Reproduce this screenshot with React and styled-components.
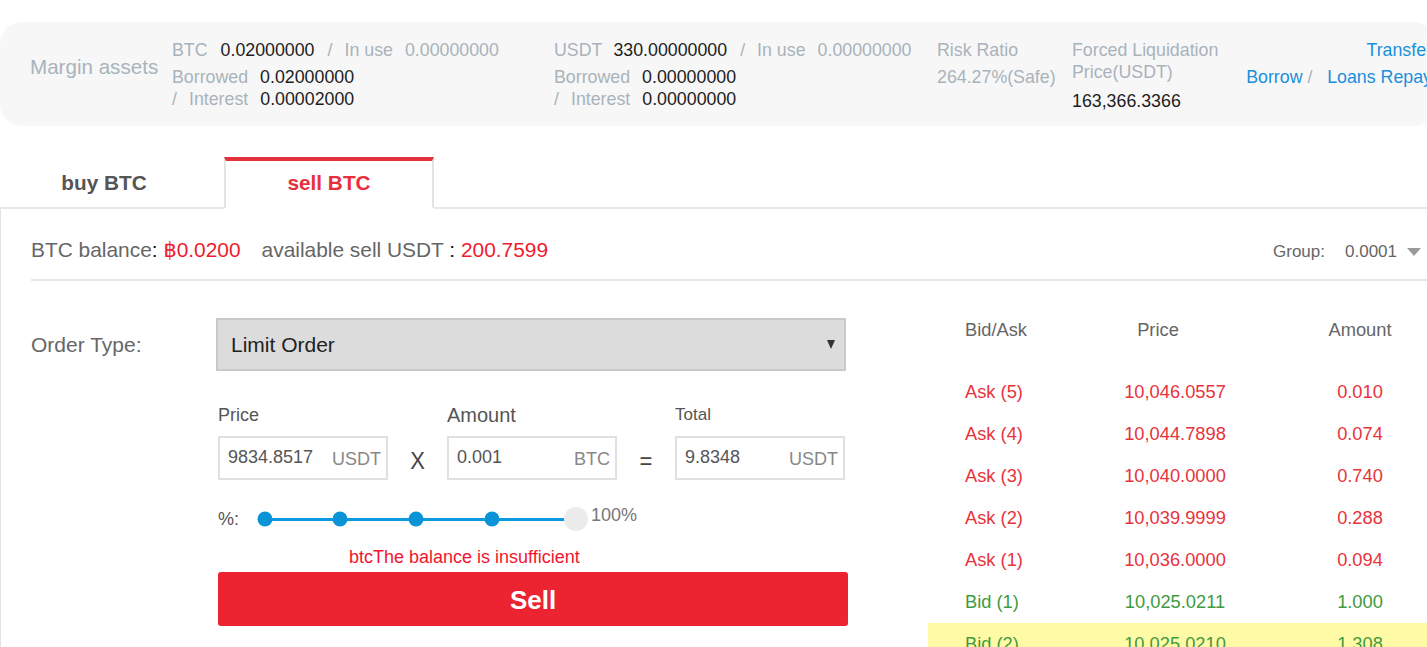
import React from "react";
import styled, { createGlobalStyle } from "styled-components";

const GlobalStyle = createGlobalStyle`
  html, body { margin: 0; padding: 0; background: #fff; overflow: hidden; }
  body { font-family: "Liberation Sans", Arial, "DejaVu Sans", sans-serif; }
  * { box-sizing: border-box; }
`;

const GRAY = "#a9b3bb";
const RED = "#ee1c2e";
const ASK = "#e8333c";
const BID = "#3f9b3f";
const BLUE = "#1a8fdc";

const Page = styled.div`
  width: 1427px;
  height: 647px;
  overflow: hidden;
`;

const MarginPanel = styled.div`
  margin-top: 22px;
  width: 1436px;
  height: 104px;
  background: #f7f7f7;
  border-radius: 22px;
  display: flex;
  padding: 17px 5px 0 0;
`;

const PanelTitle = styled.div`
  width: 172px;
  flex-shrink: 0;
  padding-left: 30px;
  margin-top: 16px;
  font-size: 20.6px;
  line-height: 24px;
  color: ${GRAY};
  white-space: nowrap;
`;

const AssetCol = styled.div`
  width: ${(p) => p.$w}px;
  flex-shrink: 0;
  font-size: 17.8px;
  line-height: 22px;
  text-align: ${(p) => (p.$right ? "right" : "left")};
  margin-left: ${(p) => (p.$right ? "auto" : "0")};
`;

const Line = styled.div`
  display: flex;
  justify-content: ${(p) => (p.$right ? "flex-end" : "flex-start")};
  white-space: nowrap;
  margin-bottom: ${(p) => p.$mb || 0}px;
`;

const Lbl = styled.span`
  color: ${GRAY};
  margin-right: ${(p) => (p.$mr ?? 12)}px;
`;

const Val = styled.span`
  color: ${(p) => (p.$muted ? GRAY : "#1d1d1d")};
  margin-right: 13px;
`;

const LinkText = styled.span`
  color: ${BLUE};
`;

const TabBar = styled.div`
  margin-top: 31px;
  height: 52px;
  display: flex;
`;

const Tab = styled.div`
  width: ${(p) => (p.$active ? 210 : 224)}px;
  display: flex;
  align-items: center;
  justify-content: center;
  padding-right: ${(p) => (p.$active ? 0 : 16)}px;
  padding-bottom: 2px;
  font-size: 20.8px;
  font-weight: bold;
  color: ${(p) => (p.$active ? "#e8303c" : "#555")};
  background: #fff;
  border-top: ${(p) => (p.$active ? "4px solid #e4323c" : "4px solid transparent")};
  border-left: ${(p) => (p.$active ? "2px solid #e3e3e3" : "none")};
  border-right: ${(p) => (p.$active ? "2px solid #e3e3e3" : "none")};
  border-bottom: ${(p) => (p.$active ? "2px solid #fff" : "2px solid #e8e8e8")};
`;

const TabFill = styled.div`
  flex: 1;
  border-bottom: 2px solid #e8e8e8;
`;

const Content = styled.div`
  display: flex;
  border-left: 1px solid #e3e3e3;
  height: 470px;
`;

const LeftCol = styled.div`
  width: 927px;
  flex-shrink: 0;
  padding-left: 30px;
`;

const RightCol = styled.div`
  flex: 1;
  min-width: 0;
`;

const BalanceRow = styled.div`
  height: 72px;
  padding-top: 29px;
  line-height: 24px;
  font-size: 20.9px;
  color: #666;
  border-bottom: 2px solid #e6e6e6;
  white-space: nowrap;
`;

const Dark = styled.span`
  color: #111;
`;

const RedVal = styled.span`
  color: ${RED};
  margin-right: ${(p) => p.$mr || 0}px;
`;

const GroupRow = styled.div`
  height: 72px;
  padding-top: 32px;
  padding-right: 6px;
  display: flex;
  justify-content: flex-end;
  align-items: flex-start;
  font-size: 17px;
  line-height: 22px;
  color: #666;
  border-bottom: 2px solid #e6e6e6;
`;

const GroupValue = styled.span`
  margin-left: 20px;
`;

const Caret = styled.span`
  width: 0;
  height: 0;
  margin-left: 10px;
  margin-top: 7px;
  border-left: 7px solid transparent;
  border-right: 7px solid transparent;
  border-top: 8px solid #9a9a9a;
`;

const OrderRow = styled.div`
  margin-top: 37px;
  display: flex;
  align-items: center;
`;

const FormLabel = styled.div`
  width: 185px;
  font-size: 21px;
  color: #666;
`;

const Select = styled.div`
  width: 630px;
  height: 53px;
  background: #dcdcdc;
  border: 2px solid #c9c9c9;
  display: flex;
  align-items: center;
  justify-content: space-between;
  padding: 0 9px 0 13px;
  font-size: 21px;
  color: #222;
`;

const SelectArrow = styled.span`
  width: 0;
  height: 0;
  border-left: 4px solid transparent;
  border-right: 4px solid transparent;
  border-top: 9px solid #333;
`;

const FieldsRow = styled.div`
  margin-top: 33px;
  padding-left: 187px;
  display: flex;
  align-items: flex-end;
`;

const Field = styled.div`
  display: flex;
  flex-direction: column;
`;

const FieldLabel = styled.div`
  font-size: ${(p) => p.$size}px;
  line-height: 22px;
  color: #555;
  margin-bottom: 10px;
`;

const InputBox = styled.div`
  width: 170px;
  height: 44px;
  border: 2px solid #e0e0e0;
  display: flex;
  align-items: center;
  justify-content: space-between;
  padding: 0 5px 2px 8px;
  font-size: 18px;
`;

const InputValue = styled.span`
  color: #555;
`;

const Unit = styled.span`
  color: #888;
  margin-top: 4px;
`;

const Operator = styled.div`
  width: ${(p) => p.$w}px;
  height: 44px;
  display: flex;
  align-items: center;
  justify-content: center;
  font-size: 22px;
  color: #444;
  padding-top: 5px;
  transform: scaleY(1.1);
`;

const SliderRow = styled.div`
  margin-top: 27px;
  padding-left: 187px;
  height: 24px;
  display: flex;
  align-items: center;
`;

const SliderLabel = styled.div`
  width: 47px;
  font-size: 18px;
  color: #555;
`;

const Track = styled.div`
  position: relative;
  width: 311px;
  height: 3px;
  background: #0b9ae0;
`;

const Dot = styled.span`
  position: absolute;
  top: 50%;
  width: 15px;
  height: 15px;
  border-radius: 50%;
  background: #0b93d8;
  transform: translate(-50%, -50%);
`;

const Knob = styled.span`
  position: absolute;
  top: 50%;
  left: 100%;
  width: 24px;
  height: 24px;
  border-radius: 50%;
  background: #ebebeb;
  transform: translate(-50%, -50%);
`;

const SliderValue = styled.span`
  margin-left: 15px;
  margin-top: -7px;
  font-size: 18px;
  color: #777;
`;

const ErrorMsg = styled.div`
  margin-top: 15px;
  padding-left: 318px;
  font-size: 18px;
  line-height: 22px;
  color: #f2152d;
`;

const SellButton = styled.button`
  display: block;
  margin-top: 4px;
  margin-left: 187px;
  width: 630px;
  height: 54px;
  padding-top: 4px;
  border: none;
  border-radius: 3px;
  background: #ec2331;
  color: #fff;
  font-family: "Liberation Sans", Arial, sans-serif;
  font-weight: bold;
  font-size: 26px;
`;

const BookHeader = styled.div`
  margin-top: 28px;
  margin-bottom: 20px;
`;

const BookRow = styled.div`
  display: grid;
  grid-template-columns: 130px 160px 210px;
  height: 42px;
  align-items: center;
  padding-left: 37px;
  font-size: 18.3px;
  color: ${(p) => p.$color};
  background: ${(p) => (p.$hl ? "#fffaa6" : "transparent")};
`;

const Cell = styled.span`
  text-align: ${(p) => p.$align || "left"};
  padding-right: ${(p) => p.$pr || 0}px;
  white-space: nowrap;
`;

const asks = [
  ["Ask (5)", "10,046.0557", "0.010"],
  ["Ask (4)", "10,044.7898", "0.074"],
  ["Ask (3)", "10,040.0000", "0.740"],
  ["Ask (2)", "10,039.9999", "0.288"],
  ["Ask (1)", "10,036.0000", "0.094"],
];
const bids = [
  ["Bid (1)", "10,025.0211", "1.000"],
  ["Bid (2)", "10,025.0210", "1.308"],
];

export default function App() {
  return (
    <Page>
      <GlobalStyle />
      <MarginPanel>
        <PanelTitle>Margin assets</PanelTitle>
        <AssetCol $w={382}>
          <Line $mb={5}>
            <Lbl $mr={13}>BTC</Lbl>
            <Val>0.02000000</Val>
            <Lbl>/</Lbl>
            <Lbl>In use</Lbl>
            <Val $muted>0.00000000</Val>
          </Line>
          <Line>
            <Lbl>Borrowed</Lbl>
            <Val>0.02000000</Val>
          </Line>
          <Line>
            <Lbl>/</Lbl>
            <Lbl>Interest</Lbl>
            <Val>0.00002000</Val>
          </Line>
        </AssetCol>
        <AssetCol $w={383}>
          <Line $mb={5}>
            <Lbl $mr={11}>USDT</Lbl>
            <Val>330.00000000</Val>
            <Lbl>/</Lbl>
            <Lbl>In use</Lbl>
            <Val $muted>0.00000000</Val>
          </Line>
          <Line>
            <Lbl>Borrowed</Lbl>
            <Val>0.00000000</Val>
          </Line>
          <Line>
            <Lbl>/</Lbl>
            <Lbl>Interest</Lbl>
            <Val>0.00000000</Val>
          </Line>
        </AssetCol>
        <AssetCol $w={135}>
          <Line $mb={5}>
            <Lbl $mr={0}>Risk Ratio</Lbl>
          </Line>
          <Line>
            <Lbl $mr={0}>264.27%(Safe)</Lbl>
          </Line>
        </AssetCol>
        <AssetCol $w={160}>
          <Line>
            <Lbl $mr={0}>Forced Liquidation</Lbl>
          </Line>
          <Line $mb={7}>
            <Lbl $mr={0}>Price(USDT)</Lbl>
          </Line>
          <Line>
            <Val>163,366.3366</Val>
          </Line>
        </AssetCol>
        <AssetCol $w={200} $right>
          <Line $mb={5} $right>
            <LinkText>Transfer</LinkText>
          </Line>
          <Line $right>
            <LinkText>Borrow</LinkText>
            <Lbl $mr={0}>&nbsp;/&nbsp;&nbsp;&nbsp;</Lbl>
            <LinkText>Loans Repay</LinkText>
          </Line>
        </AssetCol>
      </MarginPanel>

      <TabBar>
        <Tab>buy BTC</Tab>
        <Tab $active>sell BTC</Tab>
        <TabFill />
      </TabBar>

      <Content>
        <LeftCol>
          <BalanceRow>
            BTC balance<Dark>: </Dark>
            <RedVal $mr={21}>฿0.0200</RedVal>
            available sell USDT <Dark>: </Dark>
            <RedVal>200.7599</RedVal>
          </BalanceRow>

          <OrderRow>
            <FormLabel>Order Type:</FormLabel>
            <Select>
              <span>Limit Order</span>
              <SelectArrow />
            </Select>
          </OrderRow>

          <FieldsRow>
            <Field>
              <FieldLabel $size={18}>Price</FieldLabel>
              <InputBox>
                <InputValue>9834.8517</InputValue>
                <Unit>USDT</Unit>
              </InputBox>
            </Field>
            <Operator $w={59}>X</Operator>
            <Field>
              <FieldLabel $size={20}>Amount</FieldLabel>
              <InputBox>
                <InputValue>0.001</InputValue>
                <Unit>BTC</Unit>
              </InputBox>
            </Field>
            <Operator $w={58}>=</Operator>
            <Field>
              <FieldLabel $size={17}>Total</FieldLabel>
              <InputBox>
                <InputValue>9.8348</InputValue>
                <Unit>USDT</Unit>
              </InputBox>
            </Field>
          </FieldsRow>

          <SliderRow>
            <SliderLabel>%:</SliderLabel>
            <Track>
              {[0, 24, 48.5, 73].map((l) => (
                <Dot key={l} style={{ left: `${l}%` }} />
              ))}
              <Knob />
            </Track>
            <SliderValue>100%</SliderValue>
          </SliderRow>

          <ErrorMsg>btcThe balance is insufficient</ErrorMsg>
          <SellButton>Sell</SellButton>
        </LeftCol>

        <RightCol>
          <GroupRow>
            <span>Group:</span>
            <GroupValue>0.0001</GroupValue>
            <Caret />
          </GroupRow>
          <BookHeader>
            <BookRow $color="#666">
              <Cell>Bid/Ask</Cell>
              <Cell $align="center" $pr={34}>Price</Cell>
              <Cell $align="center">Amount</Cell>
            </BookRow>
          </BookHeader>
          {asks.map((r) => (
            <BookRow key={r[0]} $color={ASK}>
              <Cell>{r[0]}</Cell>
              <Cell $align="center">{r[1]}</Cell>
              <Cell $align="center">{r[2]}</Cell>
            </BookRow>
          ))}
          {bids.map((r, i) => (
            <BookRow key={r[0]} $color={BID} $hl={i === 1}>
              <Cell>{r[0]}</Cell>
              <Cell $align="center">{r[1]}</Cell>
              <Cell $align="center">{r[2]}</Cell>
            </BookRow>
          ))}
        </RightCol>
      </Content>
    </Page>
  );
}
